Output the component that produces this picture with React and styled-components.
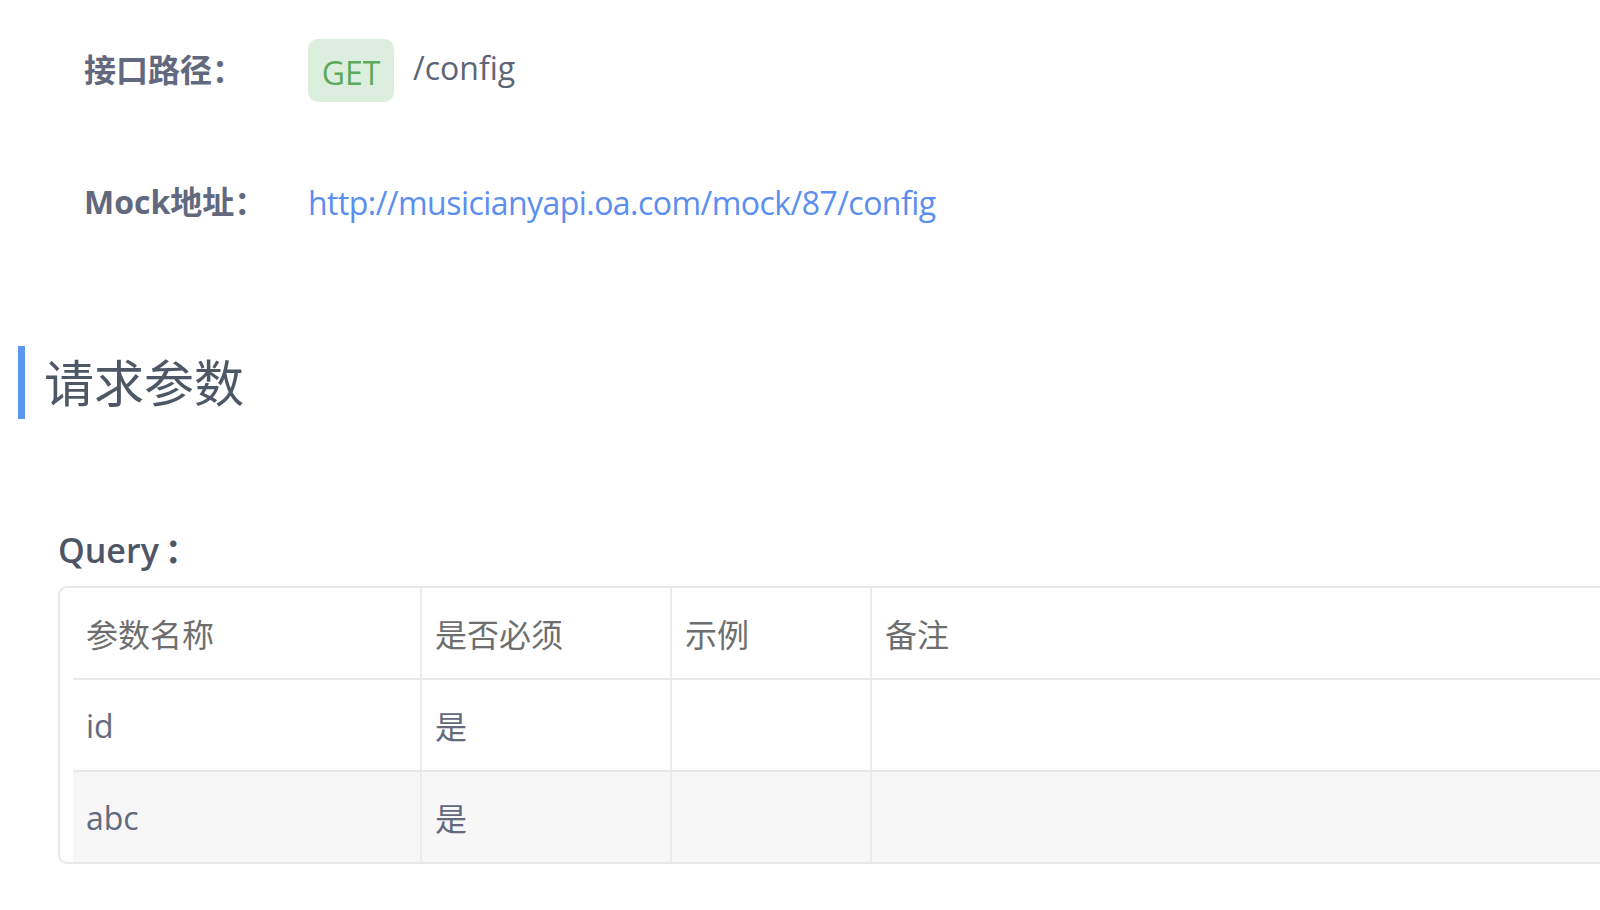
import React from 'react'
import styled, { createGlobalStyle } from 'styled-components'

const GlobalStyle = createGlobalStyle`
  html, body {
    margin: 0;
    padding: 0;
    background: #ffffff;
    overflow: hidden;
  }
  body {
    font-family: "Open Sans", "Noto Sans CJK SC", sans-serif;
  }
`

const params = [
  { name: 'id', required: '是', example: '', remark: '' },
  { name: 'abc', required: '是', example: '', remark: '' },
]

const App = () => {
  return (
    <>
      <GlobalStyle />
      <Page>
        <InfoList>
          <InfoRow>
            <Label>接口路径：</Label>
            <Value>
              <Method>GET</Method>
              <Path>/config</Path>
            </Value>
          </InfoRow>
          <InfoRow>
            <Label>Mock地址：</Label>
            <Value>
              <MockLink href="#">http://musicianyapi.oa.com/mock/87/config</MockLink>
            </Value>
          </InfoRow>
        </InfoList>

        <SectionTitle>请求参数</SectionTitle>

        <QueryBlock>
          <QueryTitle>
            Query<Colon>：</Colon>
          </QueryTitle>
          <TableWrap>
            <Table>
              <colgroup>
                <col style={{ width: 348 }} />
                <col style={{ width: 250 }} />
                <col style={{ width: 200 }} />
                <col />
              </colgroup>
              <thead>
                <tr>
                  <Th>参数名称</Th>
                  <Th>是否必须</Th>
                  <Th>示例</Th>
                  <Th>备注</Th>
                </tr>
              </thead>
              <tbody>
                {params.map((p, i) => (
                  <Row key={p.name} striped={i % 2 === 1}>
                    <Td>{p.name}</Td>
                    <Td>{p.required}</Td>
                    <Td>{p.example}</Td>
                    <Td>{p.remark}</Td>
                  </Row>
                ))}
              </tbody>
            </Table>
          </TableWrap>
        </QueryBlock>
      </Page>
    </>
  )
}

const Page = styled.div`
  width: 1600px;
  padding: 4px 0 0 18px;
  box-sizing: border-box;
`

const InfoList = styled.div`
  padding-left: 66px;
`

const InfoRow = styled.div`
  display: flex;
  align-items: center;
  height: 132px;
`

const Label = styled.div`
  width: 224px;
  flex-shrink: 0;
  padding-bottom: 5px;
  font-size: 32px;
  font-weight: 700;
  color: #62687d;
`

const Value = styled.div`
  display: flex;
  align-items: center;
  gap: 19px;
  font-size: 32px;
`

const Method = styled.span`
  display: inline-flex;
  align-items: center;
  justify-content: center;
  width: 86px;
  height: 63px;
  padding-top: 4px;
  box-sizing: border-box;
  border-radius: 10px;
  background: #dcefde;
  color: #5ca85c;
  font-size: 32px;
`

const Path = styled.span`
  color: #5f6578;
  margin-top: -6px;
`

const MockLink = styled.a`
  color: #5b8ef0;
  text-decoration: none;
  letter-spacing: -0.55px;
`

const SectionTitle = styled.h2`
  margin: 78px 0 0 0;
  height: 73px;
  display: flex;
  align-items: center;
  border-left: 7px solid #5b97f0;
  padding-left: 19px;
  font-size: 50px;
  font-weight: 400;
  color: #4e5766;
  line-height: 1;
`

const QueryBlock = styled.div`
  margin: 107px 0 0 40px;
`

const QueryTitle = styled.div`
  height: 48px;
  line-height: 48px;
  font-size: 34px;
  font-weight: 600;
  color: #4d5566;
  margin-bottom: 12px;
`

const Colon = styled.span`
  margin-left: 6px;
`

const TableWrap = styled.div`
  width: 1600px;
  border: 2px solid #e8e8e8;
  border-radius: 9px;
  padding-left: 13px;
  background: #ffffff;
`

const Table = styled.table`
  width: 100%;
  border-collapse: collapse;
  table-layout: fixed;
`

const Th = styled.th`
  height: 90px;
  padding: 0 13px;
  text-align: left;
  font-size: 32px;
  font-weight: 400;
  color: #6e6e6e;
  border-bottom: 2px solid #e8e8e8;
  & + & {
    border-left: 2px solid #ececec;
  }
`

const Row = styled.tr`
  background: ${(p) => (p.striped ? '#f7f7f7' : '#ffffff')};
  &:last-child td {
    border-bottom: none;
  }
`

const Td = styled.td`
  height: 90px;
  padding: 0 13px;
  font-size: 32px;
  color: #636a80;
  border-bottom: 2px solid #e8e8e8;
  & + & {
    border-left: 2px solid #ececec;
  }
`

export default App
